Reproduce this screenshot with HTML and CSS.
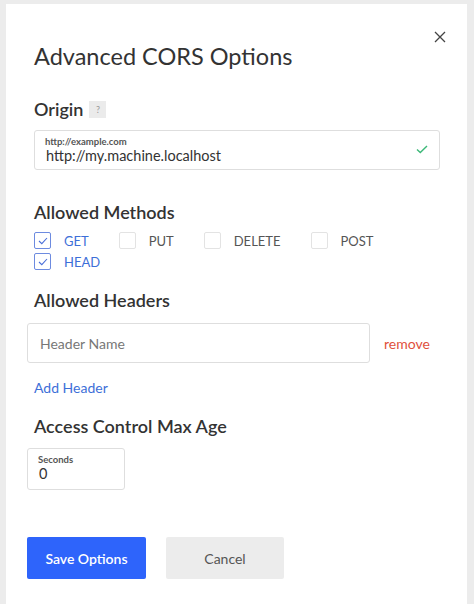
FILE: index.html
```html
<!DOCTYPE html>
<html>
<head>
<meta charset="utf-8">
<link rel="stylesheet" href="styles.css">
</head>
<body>
<div class="modal">
  <button class="close" aria-label="Close">
    <svg width="12" height="12" viewBox="0 0 12 12"><path d="M1 1L11 11M11 1L1 11" stroke="#444" stroke-width="1.3" fill="none"/></svg>
  </button>
  <h1 class="title">Advanced CORS Options</h1>

  <div class="section-head origin-head">
    <h2 class="heading">Origin</h2>
    <span class="help">?</span>
  </div>
  <div class="field origin-field">
    <span class="field-label">http://example.com</span>
    <span class="field-value">http://my.machine.localhost</span>
    <svg class="check" width="12" height="9" viewBox="0 0 12 9"><path d="M1 4.5L4.3 7.6L11 1" stroke="#3cb878" stroke-width="1.4" fill="none"/></svg>
  </div>

  <h2 class="heading methods-head">Allowed Methods</h2>
  <div class="methods">
    <label class="method on"><span class="box"><svg width="10" height="8" viewBox="0 0 10 8"><path d="M1 4L3.8 6.6L9 1" stroke="#4a6fd8" stroke-width="1.1" fill="none"/></svg></span>GET</label>
    <label class="method"><span class="box"></span>PUT</label>
    <label class="method"><span class="box"></span>DELETE</label>
    <label class="method"><span class="box"></span>POST</label>
    <label class="method on"><span class="box"><svg width="10" height="8" viewBox="0 0 10 8"><path d="M1 4L3.8 6.6L9 1" stroke="#4a6fd8" stroke-width="1.1" fill="none"/></svg></span>HEAD</label>
  </div>

  <h2 class="heading headers-head">Allowed Headers</h2>
  <div class="header-row">
    <div class="field header-field"><span class="placeholder">Header Name</span></div>
    <a class="remove">remove</a>
  </div>
  <a class="add-header">Add Header</a>

  <h2 class="heading age-head">Access Control Max Age</h2>
  <div class="field seconds-field">
    <span class="field-label">Seconds</span>
    <span class="field-value">0</span>
  </div>

  <div class="actions">
    <button class="btn primary">Save Options</button>
    <button class="btn secondary">Cancel</button>
  </div>
</div>
</body>
</html>
```
FILE: styles.css
```css
html, body {
  margin: 0;
  padding: 0;
  background: #ececec;
  height: 100%;
  overflow: hidden;
}
body {
  font-family: "Lato", "Open Sans", sans-serif;
  color: #333;
}
.modal {
  position: relative;
  margin: 4px 0 0 6px;
  width: 461px;
  height: 600px;
  background: #fff;
  box-sizing: border-box;
  padding: 0 0 0 21px;
}
.close {
  position: absolute;
  top: 27px;
  left: 428px;
  width: 12px;
  height: 12px;
  padding: 0;
  border: 0;
  background: none;
  line-height: 0;
}
.title {
  margin: 0 0 0 7px;
  padding-top: 38px;
  font-size: 23.5px;
  line-height: 28px;
  font-weight: 400;
  color: #333;
}
.heading {
  margin: 0 0 0 7px;
  font-size: 18px;
  line-height: 22px;
  font-weight: 600;
  color: #333;
}
.section-head {
  display: flex;
  align-items: center;
  gap: 6px;
  margin-top: 28px;
}
.help {
  width: 17px;
  height: 17px;
  background: #ebebeb;
  color: #999;
  font-size: 9px;
  display: flex;
  align-items: center;
  justify-content: center;
  margin-top: 1px;
}
.field {
  position: relative;
  box-sizing: border-box;
  height: 40px;
  border: 1px solid #dedede;
  border-radius: 3px;
  background: #fff;
}
.origin-field {
  margin: 10px 0 0 7px;
  width: 406px;
}
.field-label {
  position: absolute;
  left: 10px;
  top: 5px;
  font-size: 9.5px;
  font-weight: 700;
  color: #555;
}
.field-value {
  position: absolute;
  left: 11px;
  top: 16px;
  font-size: 14.5px;
  color: #333;
}
.check {
  position: absolute;
  right: 11px;
  top: 14px;
}
.methods-head {
  margin-top: 31px;
}
.methods {
  display: flex;
  flex-wrap: wrap;
  width: 380px;
  margin: 7px 0 0 7px;
}
.method {
  display: flex;
  align-items: center;
  height: 21px;
  font-size: 13px;
  color: #555;
  margin-right: 30px;
}
.method.on { color: #3d6fd8; }
.box {
  box-sizing: border-box;
  width: 17px;
  height: 17px;
  border: 1px solid #e3e3e3;
  border-radius: 2px;
  margin-right: 13px;
  display: flex;
  align-items: center;
  justify-content: center;
}
.method.on .box { border-color: #6d8be0; }
.headers-head {
  margin-top: 17px;
}
.header-row {
  display: flex;
  align-items: center;
  margin-top: 12px;
}
.header-field {
  width: 343px;
  display: flex;
  align-items: center;
}
.placeholder {
  margin-left: 12px;
  font-size: 14px;
  color: #777;
}
.remove {
  margin-left: 14px;
  font-size: 14px;
  color: #e0503c;
}
.add-header {
  display: block;
  margin: 16px 0 0 7px;
  font-size: 14px;
  color: #3d6fd8;
  line-height: 17px;
}
.age-head {
  margin-top: 19px;
}
.seconds-field {
  margin-top: 11px;
  width: 98px;
  height: 42px;
}
.actions {
  display: flex;
  gap: 20px;
  margin-top: 47px;
}
.btn {
  width: 119px;
  height: 42px;
  border: 0;
  border-radius: 2px;
  font-family: "Lato", "Open Sans", sans-serif;
  font-size: 14px;
}
.primary {
  background: #2e64fb;
  color: #fff;
  font-weight: 600;
}
.secondary {
  background: #ececec;
  color: #555;
  width: 118px;
}
```
